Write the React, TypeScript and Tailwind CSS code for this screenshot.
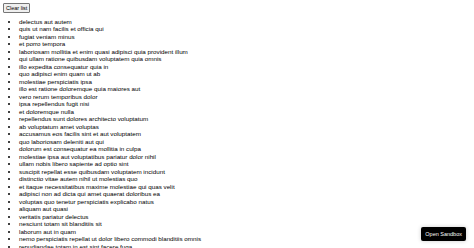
import React from 'react';

const todos = [
  'delectus aut autem',
  'quis ut nam facilis et officia qui',
  'fugiat veniam minus',
  'et porro tempora',
  'laboriosam mollitia et enim quasi adipisci quia provident illum',
  'qui ullam ratione quibusdam voluptatem quia omnis',
  'illo expedita consequatur quia in',
  'quo adipisci enim quam ut ab',
  'molestiae perspiciatis ipsa',
  'illo est ratione doloremque quia maiores aut',
  'vero rerum temporibus dolor',
  'ipsa repellendus fugit nisi',
  'et doloremque nulla',
  'repellendus sunt dolores architecto voluptatum',
  'ab voluptatum amet voluptas',
  'accusamus eos facilis sint et aut voluptatem',
  'quo laboriosam deleniti aut qui',
  'dolorum est consequatur ea mollitia in culpa',
  'molestiae ipsa aut voluptatibus pariatur dolor nihil',
  'ullam nobis libero sapiente ad optio sint',
  'suscipit repellat esse quibusdam voluptatem incidunt',
  'distinctio vitae autem nihil ut molestias quo',
  'et itaque necessitatibus maxime molestiae qui quas velit',
  'adipisci non ad dicta qui amet quaerat doloribus ea',
  'voluptas quo tenetur perspiciatis explicabo natus',
  'aliquam aut quasi',
  'veritatis pariatur delectus',
  'nesciunt totam sit blanditiis sit',
  'laborum aut in quam',
  'nemo perspiciatis repellat ut dolor libero commodi blanditiis omnis',
  'repudiandae totam in est sint facere fuga',
];

export default function App() {
  return (
    <div className="relative flex h-[248px] flex-col items-start overflow-hidden bg-white p-[3px] font-['Liberation_Sans',Arial,sans-serif] text-black">
      <button className="rounded-[1px] border border-[#767676] bg-[#efefef] px-[2px] text-[5.5px] leading-[8px]">
        Clear list
      </button>
      <ul className="mt-[5px] list-disc pl-[16px] text-[6.25px] leading-[7.48px]">
        {todos.map((t) => (
          <li key={t}>{t}</li>
        ))}
      </ul>
      <button className="absolute bottom-[7px] right-[8px] rounded-[2px] bg-black px-[4px] py-[3px] text-[5.5px] leading-[8px] text-white shadow-[0_0_4px_rgba(0,0,0,0.2)]">
        Open Sandbox
      </button>
    </div>
  );
}
